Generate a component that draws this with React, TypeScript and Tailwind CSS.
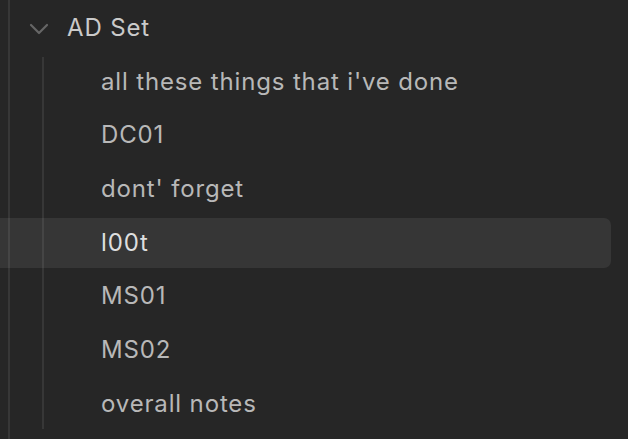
import React from "react";

const items = [
  "all these things that i've done",
  "DC01",
  "dont' forget",
  "l00t",
  "MS01",
  "MS02",
  "overall notes",
];

export default function App() {
  return (
    <div
      className="relative w-[628px] h-[439px] overflow-hidden bg-[#262626]"
      style={{ fontFamily: "Inter, 'Noto Sans', sans-serif" }}
    >
      <div className="pointer-events-none absolute left-[8px] top-0 bottom-0 w-[2px] bg-white/[0.08] z-10" />
      <div className="pt-[3px] flex flex-col gap-[3.7px]">
        <div className="h-[50px] flex items-center">
          <div className="w-[67px] flex justify-center pl-[18px] pr-[7px]">
            <svg width="20" height="12" viewBox="0 0 20 12" className="mt-[2px]">
              <path d="M2 2 L10 10 L18 2" fill="none" stroke="#666666" strokeWidth="2.2" strokeLinecap="round" strokeLinejoin="round" />
            </svg>
          </div>
          <span className="text-[24px] tracking-[0.85px] text-[#cacaca]">AD Set</span>
        </div>
        <div className="relative flex flex-col gap-[3.7px]">
          <div className="pointer-events-none absolute left-[42px] top-0 bottom-0 w-[2px] bg-white/[0.08] z-10" />
          {items.map((t) => {
            const active = t === "l00t";
            return (
              <div
                key={t}
                className={
                  "h-[50px] w-[611px] flex items-center pl-[101px] rounded-r-[7px] " +
                  (active ? "bg-[#363636] text-[#dedede]" : "text-[#b8b8b8]")
                }
              >
                <span className="text-[24px] tracking-[0.85px]">{t}</span>
              </div>
            );
          })}
        </div>
      </div>
    </div>
  );
}
